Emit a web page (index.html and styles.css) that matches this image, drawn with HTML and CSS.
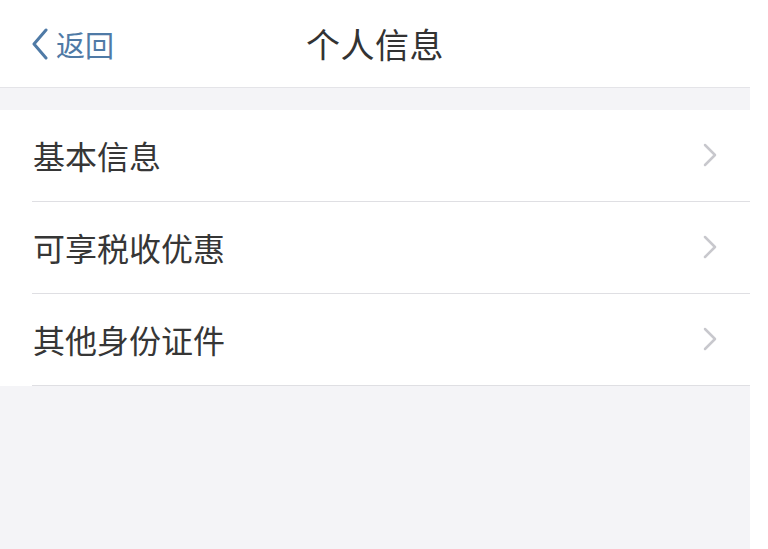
FILE: index.html
```html
<!DOCTYPE html>
<html lang="zh-CN">
<head>
    <meta charset="UTF-8">
    <meta name="viewport" content="width=device-width, initial-scale=1.0">
    <title>个人信息</title>
    <link rel="stylesheet" href="styles.css">
</head>
<body>
<div class="page">
    <nav class="navbar">
        <div class="back">
            <svg class="back-icon" viewBox="0 0 18 32" width="18" height="32">
                <polyline points="15,2 3,16 15,30" fill="none" stroke="currentColor" stroke-width="3" stroke-linecap="round" stroke-linejoin="round"/>
            </svg>
            <span>返回</span>
        </div>
        <h1>个人信息</h1>
        <div></div>
    </nav>
    <div class="list">
        <div class="row">
            <span>基本信息</span>
            <svg class="arrow" viewBox="0 0 14 24" width="14" height="24">
                <polyline points="2,2 12,12 2,22" fill="none" stroke="currentColor" stroke-width="2.5" stroke-linecap="round" stroke-linejoin="round"/>
            </svg>
        </div>
        <div class="row">
            <span>可享税收优惠</span>
            <svg class="arrow" viewBox="0 0 14 24" width="14" height="24">
                <polyline points="2,2 12,12 2,22" fill="none" stroke="currentColor" stroke-width="2.5" stroke-linecap="round" stroke-linejoin="round"/>
            </svg>
        </div>
        <div class="row">
            <span>其他身份证件</span>
            <svg class="arrow" viewBox="0 0 14 24" width="14" height="24">
                <polyline points="2,2 12,12 2,22" fill="none" stroke="currentColor" stroke-width="2.5" stroke-linecap="round" stroke-linejoin="round"/>
            </svg>
        </div>
    </div>
</div>
</body>
</html>
```

FILE: styles.css
```css
body {
    margin: 0;
    background-color: #fff;
    font-family: "Noto Sans CJK SC", "Noto Sans", sans-serif;
    color: #333;
}
.page {
    width: 750px;
    min-height: 100vh;
    background-color: #f4f4f7;
}
.navbar {
    height: 87px;
    background-color: #fff;
    border-bottom: 1px solid #e4e4e8;
    display: grid;
    grid-template-columns: 1fr auto 1fr;
    align-items: center;
}
.navbar h1 {
    margin: 0;
    font-size: 34px;
    font-weight: normal;
    color: #333;
    letter-spacing: 0.5px;
}
.back {
    display: flex;
    align-items: center;
    gap: 7px;
    padding-left: 31px;
    color: #4f7aa6;
    font-size: 29px;
}
.back-icon {
    display: block;
}
.list {
    margin-top: 22px;
    background-color: #fff;
}
.row {
    height: 91px;
    margin-left: 32px;
    padding-right: 33px;
    border-bottom: 1px solid #dfdfe3;
    display: flex;
    align-items: center;
    justify-content: space-between;
    font-size: 32px;
    color: #363636;
}
.row span {
    padding-left: 1px;
    padding-bottom: 2px;
}
.arrow {
    color: #c8c8cd;
    display: block;
    margin-top: -2px;
}
```
